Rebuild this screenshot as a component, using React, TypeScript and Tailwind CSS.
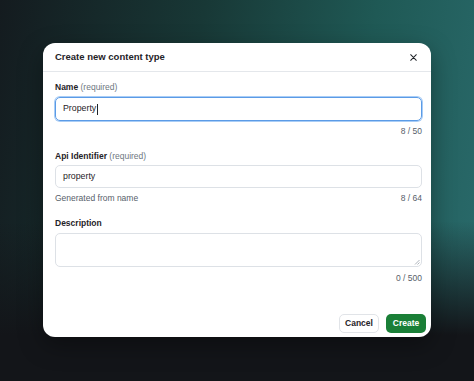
import React from "react";

export default function App() {
  return (
    <div
      className="w-[474px] h-[381px] overflow-hidden bg-[#14171b] bg-[linear-gradient(180deg,rgba(19,21,25,0)_0%,rgba(19,21,25,0)_58%,#131519_88%),linear-gradient(100deg,#141b1f_0%,#183836_38%,#1f5955_70%,#2a6b6c_100%)] pt-[43px] pl-[43px]"
      style={{ fontFamily: '"Liberation Sans", Arial, sans-serif' }}
    >
      <div className="w-[388px] h-[294px] bg-white rounded-[12px] flex flex-col shadow-[0_8px_24px_rgba(0,0,0,0.35)]">
        <div className="h-[29px] flex items-center justify-between pl-[12px] pr-[13px] border-b border-[#e4e7eb]">
          <span className="text-[9.5px] font-bold text-[#1f2328] mt-[1px]">Create new content type</span>
          <svg width="9" height="9" viewBox="0 0 16 16" fill="none" stroke="#1f2328" strokeWidth="1.8" strokeLinecap="round">
            <path d="M3 3l10 10M13 3L3 13" />
          </svg>
        </div>
        <div className="flex flex-col pl-[12px] pr-[9px] pt-[9px] flex-1">
          <label className="text-[8.5px] font-bold text-[#1f2328] leading-[12px]">
            Name <span className="font-normal text-[#6e7781]">(required)</span>
          </label>
          <div className="mt-[4px] h-[24px] rounded-[5px] border border-[#5b9be6] shadow-[0_0_0_1px_#a9cdf6] flex items-center px-[7px] text-[8.8px] text-[#1f2328]">
            Property<span className="w-px h-[11px] bg-[#1f2328] ml-[0.5px]" />
          </div>
          <div className="text-right text-[8.5px] text-[#57606a] mt-[4px] leading-[12px]">8 / 50</div>
          <label className="mt-[13px] text-[8.5px] font-bold text-[#1f2328] leading-[12px]">
            Api Identifier <span className="font-normal text-[#6e7781]">(required)</span>
          </label>
          <div className="mt-[3px] h-[23px] rounded-[5px] border border-[#dde1e6] flex items-center px-[7px] text-[8.8px] text-[#1f2328]">
            property
          </div>
          <div className="flex justify-between text-[8.5px] text-[#57606a] mt-[4px] leading-[12px]">
            <span>Generated from name</span>
            <span>8 / 64</span>
          </div>
          <label className="mt-[13px] text-[8.5px] font-bold text-[#1f2328] leading-[12px]">Description</label>
          <div className="mt-[4px] h-[34px] rounded-[5px] border border-[#dde1e6] relative">
            <svg className="absolute right-[1px] bottom-[1px]" width="6" height="6" viewBox="0 0 6 6" stroke="#9aa1a9" strokeWidth="0.8">
              <path d="M5.5 1L1 5.5M5.5 3.5L3.5 5.5" />
            </svg>
          </div>
          <div className="text-right text-[8.5px] text-[#57606a] mt-[5px] leading-[12px]">0 / 500</div>
          <div className="flex justify-end gap-[7px] mt-[30px]">
            <button className="h-[19px] w-[40px] rounded-[5px] border border-[#e1e4e8] bg-white text-[8.5px] font-bold text-[#1f2328]">
              Cancel
            </button>
            <button className="h-[19px] w-[40px] rounded-[5px] bg-[#1a7f37] text-[8.5px] font-bold text-white mr-[-4px]">
              Create
            </button>
          </div>
        </div>
      </div>
    </div>
  );
}
